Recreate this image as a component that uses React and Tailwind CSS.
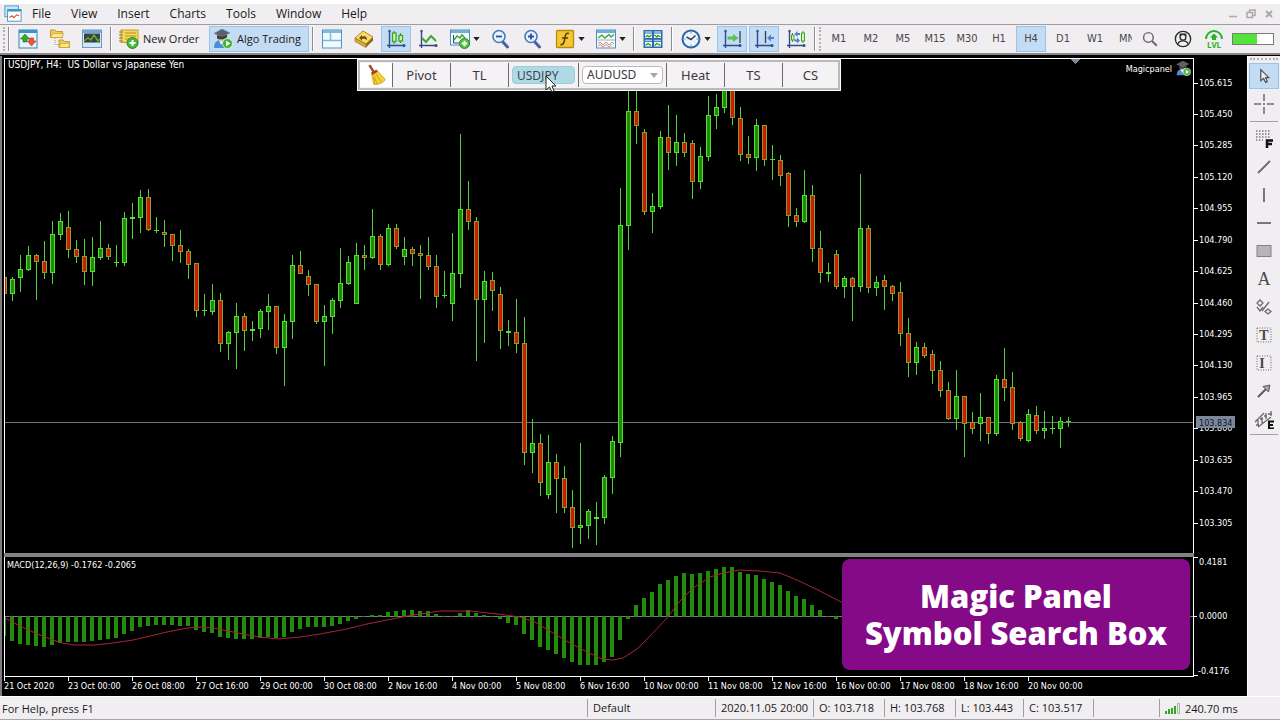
import React, { useState } from "react";

// [high, body top, body bottom, low, 1 = up / 0 = down], one entry per H4 bar
const CANDLES = [
  [277, 277, 294, 294, 0], [277, 279, 294, 301, 1], [255, 269, 278, 292, 1], [246, 255, 270, 271, 1],
  [254, 255, 262, 300, 0], [241, 261, 273, 279, 0], [221, 234, 273, 284, 1], [213, 221, 235, 240, 1],
  [211, 227, 250, 258, 0], [240, 249, 257, 263, 0], [239, 256, 272, 285, 0], [237, 257, 272, 286, 1],
  [221, 248, 258, 260, 1], [244, 248, 257, 260, 0], [245, 262, 263, 267, 1], [212, 218, 263, 266, 1],
  [203, 217, 219, 239, 1], [190, 197, 218, 233, 1], [189, 197, 230, 231, 0], [217, 230, 231, 233, 1],
  [220, 232, 235, 247, 0], [234, 234, 246, 261, 0], [230, 245, 252, 263, 0], [249, 251, 265, 279, 0],
  [263, 263, 311, 317, 0], [294, 310, 311, 316, 1], [284, 300, 312, 315, 1], [293, 300, 344, 352, 0],
  [331, 332, 344, 360, 1], [303, 316, 333, 369, 1], [313, 316, 331, 351, 0], [321, 329, 331, 341, 1],
  [309, 311, 329, 338, 1], [294, 306, 312, 330, 1], [306, 306, 348, 354, 0], [314, 321, 348, 386, 1],
  [255, 265, 322, 339, 1], [251, 265, 274, 274, 0], [270, 276, 285, 296, 0], [284, 284, 322, 324, 0],
  [305, 316, 322, 366, 1], [298, 300, 317, 334, 1], [248, 283, 301, 308, 1], [256, 262, 284, 285, 1],
  [243, 255, 304, 304, 1], [245, 255, 258, 270, 0], [209, 236, 258, 259, 1], [234, 236, 265, 270, 0],
  [224, 228, 265, 266, 1], [224, 228, 247, 249, 0], [237, 249, 257, 265, 1], [247, 249, 254, 266, 0],
  [245, 253, 256, 299, 0], [237, 255, 267, 270, 0], [255, 266, 297, 308, 0], [271, 295, 296, 298, 1],
  [233, 273, 304, 321, 1], [134, 209, 274, 288, 1], [181, 209, 222, 230, 0], [217, 221, 300, 361, 0],
  [271, 281, 300, 343, 1], [272, 280, 291, 311, 0], [287, 294, 331, 349, 0], [320, 331, 333, 346, 1],
  [299, 332, 344, 353, 0], [317, 343, 453, 465, 0], [419, 443, 453, 473, 1], [434, 443, 483, 496, 0],
  [435, 462, 495, 499, 1], [454, 462, 479, 513, 0], [466, 478, 508, 513, 0], [490, 507, 528, 548, 0],
  [443, 525, 528, 544, 1], [509, 511, 526, 539, 1], [502, 517, 519, 545, 1], [475, 477, 518, 524, 1],
  [436, 441, 478, 494, 1], [188, 225, 443, 457, 1], [70, 111, 226, 250, 1], [70, 111, 126, 144, 0],
  [129, 132, 212, 215, 0], [193, 206, 212, 233, 1], [131, 137, 207, 209, 1], [105, 137, 153, 170, 0],
  [115, 142, 153, 166, 1], [133, 142, 153, 157, 0], [140, 143, 182, 199, 0], [147, 156, 182, 189, 1],
  [96, 115, 157, 161, 1], [94, 107, 116, 129, 1], [80, 84, 108, 113, 1], [80, 84, 118, 125, 0],
  [107, 118, 155, 161, 0], [136, 154, 158, 164, 0], [119, 125, 158, 171, 1], [125, 125, 160, 166, 0],
  [145, 159, 160, 180, 1], [155, 160, 176, 186, 0], [172, 173, 216, 227, 0], [208, 215, 222, 227, 0],
  [170, 195, 222, 223, 1], [185, 195, 249, 262, 0], [231, 248, 273, 283, 0], [263, 272, 274, 282, 1],
  [250, 254, 287, 289, 0], [276, 278, 287, 298, 1], [277, 278, 287, 321, 0], [174, 228, 287, 292, 1],
  [225, 228, 288, 293, 0], [276, 282, 288, 296, 1], [275, 280, 287, 310, 0], [285, 286, 294, 301, 0],
  [282, 292, 334, 346, 0], [318, 333, 363, 377, 0], [342, 347, 363, 375, 1], [343, 347, 356, 358, 0],
  [350, 354, 371, 384, 0], [361, 370, 391, 397, 0], [382, 390, 419, 420, 0], [370, 396, 419, 430, 1],
  [396, 396, 424, 457, 0], [412, 422, 429, 434, 0], [393, 417, 424, 441, 1], [417, 417, 434, 444, 0],
  [375, 379, 434, 436, 1], [348, 379, 388, 401, 0], [372, 387, 424, 430, 0], [421, 422, 439, 441, 0],
  [409, 414, 441, 442, 1], [406, 415, 431, 434, 0], [411, 428, 431, 439, 1], [416, 428, 429, 434, 1],
  [417, 421, 429, 448, 1], [417, 421, 422, 427, 1],
];

// histogram heights, negative is below zero
const MACD = [
  -20, -25, -28, -29, -30, -31, -29, -27, -26, -26, -26, -25, -24, -23, -22, -18, -15, -11, -10, -9, -9, -9, -10, -10,
  -14, -16, -17, -21, -22, -23, -23, -23, -22, -21, -22, -21, -16, -13, -11, -11, -11, -10, -8, -5, -3, -1, 2, 2, 5, 6,
  7, 7, 6, 6, 3, 1, 1, 4, 7, 4, 2, 1, -3, -7, -9, -18, -24, -31, -34, -38, -42, -46, -49, -49, -49, -46, -41, -24, -3,
  12, 19, 25, 33, 37, 41, 44, 43, 44, 46, 48, 50, 50, 45, 43, 42, 38, 35, 32, 26, 21, 18, 12, 7, 1, -3, -5,
];

const SIGNAL =
  "M0 61 L15 69 L28 75 L45 82 L57 86 L70 88 L90 88 L108 86 L128 83 L145 79 L162 75 L182 71 L195 70 L208 71 L228 75 L248 79 L272 82 L295 80 L315 77 L342 72 L362 67 L382 63 L402 59 L422 56 L435 54 L465 54 L492 57 L515 60 L530 65 L548 76 L565 86 L582 95 L597 102 L608 103 L618 101 L632 92 L645 79 L662 61 L675 44 L688 31 L705 20 L718 16 L735 13 L755 14 L775 16 L792 23 L815 34 L838 46 L860 56";

const PRICES = [
  ["105.615", 83], ["105.450", 114], ["105.285", 145], ["105.120", 177], ["104.955", 208],
  ["104.790", 240], ["104.625", 271], ["104.460", 303], ["104.295", 334], ["104.130", 365],
  ["103.965", 397], ["103.800", 428], ["103.635", 460], ["103.470", 491], ["103.305", 523],
];

const DATES = [
  "21 Oct 2020", "23 Oct 00:00", "26 Oct 08:00", "27 Oct 16:00", "29 Oct 00:00", "30 Oct 08:00",
  "2 Nov 16:00", "4 Nov 00:00", "5 Nov 08:00", "6 Nov 16:00", "10 Nov 00:00", "11 Nov 08:00",
  "12 Nov 16:00", "16 Nov 00:00", "17 Nov 08:00", "18 Nov 16:00", "20 Nov 00:00",
];

const TIMEFRAMES = ["M1", "M2", "M5", "M15", "M30", "H1", "H4", "D1", "W1", "MN"];
const MENU = ["File", "View", "Insert", "Charts", "Tools", "Window", "Help"];

const Icon = ({ children, className = "w-5 h-5" }) => (
  <svg viewBox="0 0 20 20" className={`${className} shrink-0`} fill="none" aria-hidden="true">
    {children}
  </svg>
);

const Axes = () => (
  <g stroke="#2f4a8c" fill="#2f4a8c">
    <path d="M3.500 2V19M1 16.500H18" strokeWidth="1.400" />
    <circle cx="3.500" cy="2" r="1.200" stroke="none" />
    <circle cx="18" cy="16.500" r="1.500" stroke="none" />
  </g>
);

const MarketIcon = () => (
  <Icon>
    <rect x="1" y="1" width="18" height="18" fill="#e8f4fc" stroke="#2f86b8" />
    <path d="M1 2.500H19" stroke="#3c94c6" strokeWidth="3" />
    <path d="M7 5L11.500 10H9V13H5V10H2.500Z" fill="#35a82c" stroke="#1f7f1c" strokeWidth=".7" />
    <path d="M13.500 17L9.500 12H11.500V9H15.500V12H18Z" fill="#ef5438" stroke="#c03a24" strokeWidth=".7" />
  </Icon>
);

const FoldersIcon = () => (
  <Icon>
    <path d="M5 7V15.500H11" stroke="#999" strokeDasharray="1 1" />
    <path d="M0.500 1H5L6.500 2.500H12.500V8.500H.5Z" fill="#ecc95a" stroke="#c79a2c" />
    <path d="M2.500 4.500H13.500L12 8.500H.8Z" fill="#fbe78e" stroke="#c79a2c" strokeWidth=".6" />
    <path d="M9 11H13L14.500 12.500H19.500V18.500H9Z" fill="#ecc95a" stroke="#c79a2c" />
    <path d="M11 14.500H20L18.500 18.500H9.500Z" fill="#fbe78e" stroke="#c79a2c" strokeWidth=".6" />
  </Icon>
);

const TerminalIcon = () => (
  <Icon>
    <rect x=".5" y="1" width="19" height="17.500" fill="#d5e6f5" stroke="#6a9cc8" />
    <path d="M1 2.500H19" stroke="#6fa8d8" strokeWidth="3" />
    <rect x="2" y="4.500" width="16" height="9" fill="#3a4148" />
    <path d="M2 12L6 9L9 11L12 6L16 12L18 10" stroke="#5fae2c" strokeWidth="1.500" />
  </Icon>
);

const OrderIcon = () => (
  <Icon>
    <rect x="2" y="1" width="17" height="12.500" fill="#f5d95c" stroke="#c79b24" />
    <path d="M6 4H17M6 7H17M6 10H14" stroke="#b58c1c" />
    <path d="M0 3H4M0 6H4M0 9H4M0 12H4" stroke="#8a7a3a" />
    <circle cx="13.500" cy="14" r="5.500" fill="#48b83a" stroke="#2a8c24" />
    <path d="M13.500 11V17M10.500 14H16.500" stroke="#fff" strokeWidth="2" />
  </Icon>
);

const AlgoIcon = ({ className }) => (
  <Icon className={className}>
    <path d="M1 19C1 13 4 11 8 11S15 13 15 19Z" fill="#4b8fd0" />
    <path d="M6 11L8 16L11 11Z" fill="#f3f3f3" />
    <circle cx="9" cy="8" r="4" fill="#d9b383" />
    <path d="M1 4.500L9 0L17 4L9.500 7.500Z" fill="#5c6068" stroke="#7c8088" strokeWidth=".6" />
    <path d="M4 6V9.500C7 11 11 10.500 14 8.500V5.500L9.500 7.500Z" fill="#3e4248" />
    <circle cx="14.500" cy="14.500" r="5" fill="#43b336" stroke="#e8f6e4" strokeWidth=".8" />
    <path d="M13 11.800L17.500 14.500L13 17.200Z" fill="#fff" />
  </Icon>
);

const LayoutIcon = () => (
  <Icon>
    <rect x=".5" y="1" width="19" height="18" fill="#f2f9fe" stroke="#4a94c4" />
    <path d="M1 2.500H19" stroke="#7db9dc" strokeWidth="3" />
    <path d="M1 11.500H19M8.500 4V11.500" stroke="#7db9dc" strokeWidth="1.500" />
  </Icon>
);

const TagIcon = () => (
  <Icon>
    <path d="M1 9L9 2L19 8L12 15Z" fill="#f7dc6c" stroke="#b48a20" />
    <path d="M1 9L12 15V18.500L1 12.500Z" fill="#d9ab34" stroke="#8d6714" strokeWidth=".6" />
    <path d="M12 15L19 8V11.500L12 18.500Z" fill="#8d6c22" />
    <path d="M5 9L8 6V7.500C11 6.500 14 8 12.500 11.500C12 9.500 10.500 9.500 8 10V11.500Z" fill="#6a4e10" />
  </Icon>
);

const CandlesIcon = () => (
  <Icon>
    <Axes />
    <path d="M8 2V15M14.500 4V14" stroke="#36a51f" strokeWidth="1.300" />
    <rect x="6.500" y="4" width="3.500" height="8.500" fill="#d7f4c8" stroke="#36a51f" strokeWidth="1.300" />
    <rect x="13" y="6.500" width="3.500" height="5.500" fill="#d7f4c8" stroke="#36a51f" strokeWidth="1.300" />
  </Icon>
);

const LineChartIcon = () => (
  <Icon>
    <Axes />
    <path d="M4 9L8 13L13 7L18 12" stroke="#3fa72c" strokeWidth="2" />
  </Icon>
);

const AddIndicatorIcon = () => (
  <Icon>
    <rect x=".5" y="1" width="19" height="15" fill="#f4f9fd" stroke="#4a8fc0" />
    <path d="M1 2.500H19" stroke="#6eaed8" strokeWidth="3" />
    <path d="M3.500 6V14H13" stroke="#2f4a8c" />
    <path d="M4 11L7 7L10 9L12 6L15 9" stroke="#3fa72c" strokeWidth="1.500" />
    <circle cx="14.500" cy="14.500" r="5" fill="#4fc43c" stroke="#2a8c24" />
    <path d="M14.500 11.700V17.300M11.700 14.500H17.300" stroke="#fff" strokeWidth="1.800" />
  </Icon>
);

const ZoomIcon = ({ plus }) => (
  <Icon>
    <path d="M11 12L16.500 18" stroke="#4a5fa8" strokeWidth="3" strokeLinecap="round" />
    <circle cx="8" cy="7.500" r="6" fill="#e6f3fd" stroke="#3f7cc0" strokeWidth="1.600" />
    <path d={plus ? "M5 7.500H11M8 4.500V10.500" : "M5 7.500H11"} stroke="#2c4f9c" strokeWidth="1.800" />
  </Icon>
);

const FunctionIcon = () => (
  <Icon>
    <rect x="1.500" y="1.500" width="17" height="17" rx="1" fill="#f5c634" stroke="#b98a12" strokeWidth="1.300" />
    <path d="M14 4.500C11 3.500 10.500 5.500 10 8.500S9 16.500 5.500 15.500M7 9H13" stroke="#54420c" strokeWidth="1.600" />
  </Icon>
);

const TemplateIcon = () => (
  <Icon>
    <rect x=".5" y="1" width="19" height="18" fill="#f6fafd" stroke="#4a8fc0" />
    <path d="M1 2.500H19" stroke="#6eaed8" strokeWidth="3" />
    <path d="M2 9L6 6L9 9L13 5.500L15 8L18 5.500" stroke="#3fa72c" strokeWidth="1.300" />
    <path d="M1 11H19" stroke="#9cb4c6" />
    <path d="M2 14.500L4 13L7 16L10 13L13 16L16 13L18 15M2 17L4 15.500L7 18L10 15.500L13 18L16 15.500" stroke="#d27a70" strokeWidth=".9" />
  </Icon>
);

const TilesIcon = () => (
  <Icon>
    <rect x=".5" y="1" width="19" height="18" fill="#2b6cb0" />
    <path d="M2 4.500H9V9H2ZM11 4.500H18V9H11ZM2 13H9V17.500H2ZM11 13H18V17.500H11Z" fill="#f4fbf2" />
    <path d="M2 3H9M11 3H18M2 11.500H9M11 11.500H18" stroke="#a4cdec" strokeWidth="1.300" />
    <path d="M2.500 8L4.500 6.500L6 8L8.500 6M11.500 6L14 8L15 6.500L17.500 8M2.500 16.500L5 14.500L8 16.500M11.500 16.500L14 14.500L17.500 16.500" stroke="#2f8f22" strokeWidth="1.200" />
  </Icon>
);

const ClockIcon = () => (
  <Icon>
    <circle cx="10" cy="10" r="8.500" fill="#e9f4fd" stroke="#2f66aa" strokeWidth="2" />
    <path d="M5.500 8L10 10.500L14.500 6.500" stroke="#3c4656" strokeWidth="1.600" />
    <path d="M10 3V4.500M10 15.500V17M3 10H4.500M15.500 10H17" stroke="#7890a8" />
  </Icon>
);

const AutoScrollIcon = () => (
  <Icon>
    <Axes />
    <path d="M18 2V14" stroke="#2f3f60" strokeWidth="1.300" />
    <path d="M5.500 7.500H11V5L16.500 9L11 13V10.500H5.500Z" fill="#5cc04c" />
  </Icon>
);

const ShiftIcon = () => (
  <Icon>
    <Axes />
    <path d="M11.500 2V14" stroke="#2f3f60" strokeWidth="1.300" />
    <path d="M20 8H17V5.500L13 9L17 12.500V10H20Z" fill="#4b82cc" />
  </Icon>
);

const StepIcon = () => (
  <Icon>
    <Axes />
    <path d="M6.500 4V13M17 2V14" stroke="#36a51f" />
    <rect x="5.500" y="6" width="2.500" height="5" fill="#d7f4c8" stroke="#36a51f" />
    <rect x="15.500" y="4" width="3" height="8" fill="#d7f4c8" stroke="#36a51f" />
    <path d="M14 4H11.500V2L8.500 5L11.500 8V6H14ZM8.500 10.500H11V8.500L14 11.500L11 14.500V12.500H8.500Z" fill="#4b7fd0" />
  </Icon>
);

const BroomIcon = () => (
  <Icon className="w-[22px] h-[22px]">
    <path d="M4 1L8.500 8" stroke="#9c4a26" strokeWidth="2.200" />
    <path d="M6 9L11 6L18.500 14C17 17 12 19 8 18.500Z" fill="#f2d33c" stroke="#c99c18" strokeWidth=".7" />
    <path d="M6 9L11 6" stroke="#b5382a" strokeWidth="2.200" />
    <path d="M8 10L11 18M10 9L15 16.500M7.500 12L9 18" stroke="#c99c18" strokeWidth=".8" />
  </Icon>
);

const Tool = ({ label, active, drop, children }) => (
  <button
    aria-label={label}
    className={
      "flex items-center h-[26px] shrink-0 border " +
      (drop ? "w-[39px] pl-1 gap-[3px] " : "w-[30px] justify-center ") +
      (active ? "bg-[#c3dcf3] border-[#98c5ea]" : "border-transparent")
    }
  >
    {children}
    {drop && (
      <svg viewBox="0 0 8 5" className="w-[7px] h-[4px] shrink-0">
        <path d="M0 0H8L4 5Z" fill="#222" />
      </svg>
    )}
  </button>
);

const Sep = () => <div className="w-[2px] h-6 mx-px shrink-0 border-l border-[#8c8c8c] bg-white" />;

const Grip = () => <div className="w-px h-6 shrink-0 border-l-2 border-dotted border-[#b4b0b4]" />;

function MenuBar() {
  return (
    <div className="flex items-center h-5 pl-1 pr-[6px] bg-[#f0eef0]">
      <Icon className="w-[18px] h-[18px]">
        <rect x="1" y="1" width="15" height="12" fill="#cfe8f8" stroke="#3c94c6" />
        <rect x="4" y="5" width="15" height="13" fill="#fff" stroke="#3c94c6" />
        <path d="M4 6H19" stroke="#3c94c6" strokeWidth="2.500" />
        <path d="M6 14L9 12L11 14L14 11L17 12" stroke="#e0563c" strokeWidth="1.300" />
      </Icon>
      <nav className="flex gap-5 ml-[10px]">
        {MENU.map((m) => (
          <button key={m} className="text-xs leading-4 text-[#1a1a1a]">{m}</button>
        ))}
      </nav>
      <div className="flex items-center gap-2 ml-auto text-[#aaa6aa]">
        <button aria-label="Minimize"><Icon className="w-[10px] h-[10px]"><path d="M2 15H18" stroke="currentColor" strokeWidth="3" /></Icon></button>
        <button aria-label="Restore"><Icon className="w-[10px] h-[10px]"><path d="M2 7H13V17H2ZM7 6V2H18V13H14" stroke="currentColor" strokeWidth="3" /></Icon></button>
        <button aria-label="Close"><Icon className="w-[10px] h-[10px]"><path d="M4 4L16 16M16 4L4 16" stroke="currentColor" strokeWidth="4" /></Icon></button>
      </div>
    </div>
  );
}

function Toolbar({ timeframe, setTimeframe }) {
  return (
    <div className="flex items-center gap-[2px] h-[31px] pl-[3px] border-t border-[#a09ca0] border-b-2 border-b-[#8a868a] bg-[#f0eef0]">
      <Grip />
      <Sep />
      <Tool label="Market watch"><MarketIcon /></Tool>
      <Tool label="Navigator"><FoldersIcon /></Tool>
      <Tool label="Terminal"><TerminalIcon /></Tool>
      <Sep />
      <button className="flex items-center gap-1 w-[92px] h-[26px] pl-1 shrink-0 text-[11px] whitespace-nowrap text-[#1a1a1a]">
        <OrderIcon /> New Order
      </button>
      <button className="flex items-center gap-1 w-[100px] h-[26px] pl-[3px] shrink-0 text-[11px] whitespace-nowrap text-[#1a1a1a] bg-[#c3dcf3] border border-[#98c5ea]">
        <AlgoIcon /> Algo Trading
      </button>
      <Sep />
      <Tool label="Toolbox"><LayoutIcon /></Tool>
      <Tool label="Orders"><TagIcon /></Tool>
      <Tool label="Candlesticks" active><CandlesIcon /></Tool>
      <Tool label="Line chart"><LineChartIcon /></Tool>
      <Tool label="New chart" drop><AddIndicatorIcon /></Tool>
      <Tool label="Zoom out"><ZoomIcon /></Tool>
      <Tool label="Zoom in"><ZoomIcon plus /></Tool>
      <Tool label="Indicators" drop><FunctionIcon /></Tool>
      <Tool label="Templates" drop><TemplateIcon /></Tool>
      <Sep />
      <Tool label="Tile windows"><TilesIcon /></Tool>
      <Sep />
      <Tool label="Periods" drop><ClockIcon /></Tool>
      <Tool label="Auto scroll" active><AutoScrollIcon /></Tool>
      <Tool label="Chart shift" active><ShiftIcon /></Tool>
      <Tool label="Step by step"><StepIcon /></Tool>
      <Sep />
      <Grip />
      <div className="flex gap-[2px] overflow-hidden shrink w-[308px] ml-px">
        {TIMEFRAMES.map((t) => (
          <button
            key={t}
            onClick={() => setTimeframe(t)}
            className={
              "w-[30px] h-[26px] shrink-0 border font-['DejaVu_Sans_Condensed','DejaVu_Sans',sans-serif] text-[11px] text-[#4a464a] " +
              (t === timeframe ? "bg-[#c3dcf3] border-[#98c5ea]" : "border-transparent")
            }
          >
            {t}
          </button>
        ))}
      </div>
      <div className="flex items-center gap-2 ml-auto pr-[6px]">
        <div className="flex items-center gap-3">
          <button aria-label="Search" className="mr-1">
            <Icon className="w-4 h-4">
              <circle cx="8" cy="8" r="6" stroke="#6c686c" strokeWidth="1.800" />
              <path d="M12.500 12.500L18.500 18.500" stroke="#6c686c" strokeWidth="2.500" />
            </Icon>
          </button>
          <button aria-label="Account">
            <Icon className="w-[18px] h-[18px]">
              <circle cx="10" cy="10" r="8.500" stroke="#2c2c2c" strokeWidth="1.500" />
              <circle cx="10" cy="8" r="3.200" stroke="#2c2c2c" strokeWidth="1.500" />
              <path d="M4.500 15.500C5 12.500 7 12 10 12S15 12.500 15.500 15.500M7 7V4.500H13V7" stroke="#2c2c2c" strokeWidth="1.500" />
            </Icon>
          </button>
          <button aria-label="Level">
            <svg viewBox="0 0 20 20" className="w-5 h-5">
              <path d="M2 10A8 8 0 0 1 18 10" fill="none" stroke="#28b428" strokeWidth="2" />
              <path d="M10 4.500L14 8.500H12V11H8V8.500H6Z" fill="#28b428" />
              <text x="10" y="19" textAnchor="middle" fontSize="8" fontWeight="bold" fill="#28b428">LVL</text>
            </svg>
          </button>
        </div>
        <div className="flex w-[42px] h-3 border border-[#7c787c] bg-white">
          <div className="w-3/5 bg-[#56e23c]" />
        </div>
      </div>
    </div>
  );
}

function MagicPanel() {
  const [symbol, setSymbol] = useState("USDJPY");
  const [pair, setPair] = useState("AUDUSD");

  const cell = "h-6 border-l border-[#6c686c] text-[13px] leading-6 text-[#3c383c] ";

  return (
    <div className="absolute top-0 left-1/2 -translate-x-1/2 border border-white z-10">
      <div className="flex items-center h-[30px] border-2 border-[#bcb8bc] bg-[#f4f2f4] font-['Noto_Sans',sans-serif]">
        <button aria-label="Clear chart" className="flex items-center justify-center w-8 h-6 bg-white">
          <BroomIcon />
        </button>
        <button className={cell + "w-[58px]"}>Pivot</button>
        <button className={cell + "w-[58px]"}>TL</button>
        <div className="relative flex items-center w-[70px] h-6 px-[3px] border-l border-[#6c686c]">
          <input
            aria-label="Symbol search"
            value={symbol}
            onChange={(e) => setSymbol(e.target.value)}
            className="w-full h-[18px] pl-1 rounded-sm border border-[#9ecbd9] bg-[#b0d9e6] text-xs leading-4 text-[#3c484c] outline-none"
          />
          <svg viewBox="0 0 12 18" className="absolute left-9 top-3 w-3 h-[18px]">
            <path d="M1 1V15L4.500 12L7 17L9 16L7 11H11Z" fill="#fff" stroke="#222" strokeWidth="1" />
          </svg>
        </div>
        <div className="relative flex items-center w-[88px] h-6 px-[3px] border-l border-[#6c686c]">
          <select
            aria-label="Symbol"
            value={pair}
            onChange={(e) => setPair(e.target.value)}
            className="appearance-none w-full h-[18px] pl-1 rounded-sm border border-[#bcb8bc] bg-white text-xs leading-4 text-[#3c383c] outline-none"
          >
            <option>AUDUSD</option>
            <option>EURUSD</option>
            <option>USDJPY</option>
          </select>
          <svg viewBox="0 0 8 5" className="absolute right-2 w-2 h-[5px] pointer-events-none">
            <path d="M0 0H8L4 5Z" fill="#a8a4a8" />
          </svg>
        </div>
        <button className={cell + "w-[58px]"}>Heat</button>
        <button className={cell + "w-[58px]"}>TS</button>
        <button className={cell + "w-14"}>CS</button>
      </div>
    </div>
  );
}

function PriceChart() {
  return (
    <svg className="absolute inset-0 w-full h-full" shapeRendering="crispEdges">
      <g transform="translate(0 -59)">
        <rect x="0" y="422" width="100%" height="1" fill="#6c7480" />
        {CANDLES.map(([high, top, bottom, low, up], i) => {
          const x = i * 8 - 1;
          return (
            <g key={i}>
              <rect x={x} y={high} width="1" height={Math.max(low - high, 1)} fill="#4fd23c" />
              <rect x={x - 2} y={top} width="5" height={Math.max(bottom - top, 1)} fill={up ? "#4fe02c" : "#8c9c28"} />
              {bottom - top > 2 && (
                <rect x={x - 1} y={top + 1} width="3" height={bottom - top - 2} fill={up ? "#1f8c0c" : "#cc1c08"} />
              )}
            </g>
          );
        })}
        <path d="M1065 59H1075L1070 64Z" fill="#7c8898" />
      </g>
    </svg>
  );
}

function MacdChart() {
  return (
    <svg className="absolute inset-0 w-full h-full">
      <g shapeRendering="crispEdges">
        {MACD.map((v, i) => (
          <rect key={i} x={i * 8 - 3} y={v > 0 ? 60 - v : 59} width="4" height={Math.abs(v)} fill="#248c0c" />
        ))}
        <line x1="0" y1="59.500" x2="100%" y2="59.500" stroke="#7c7c84" strokeDasharray="5 3" />
      </g>
      <path d={SIGNAL} fill="none" stroke="#a8243c" strokeWidth="1" />
    </svg>
  );
}

function Chart() {
  return (
    <div className="flex flex-1 min-w-0 pl-[2px] pt-[2px] bg-black border-l-2 border-[#807c80] text-white font-['DejaVu_Sans_Condensed','DejaVu_Sans',sans-serif] text-[9px] leading-3">
      <div className="flex flex-col flex-1 min-w-0">
        <div className="relative flex-1 border-l border-t border-r border-white overflow-hidden">
          <PriceChart />
          <div className="relative flex justify-between items-start pl-[3px] pr-[2px]">
            <span className="whitespace-pre text-[10px]">USDJPY, H4:  US Dollar vs Japanese Yen</span>
            <span className="flex items-center gap-1 pt-[2px]">
              Magicpanel <AlgoIcon className="w-[15px] h-[15px]" />
            </span>
          </div>
          <MagicPanel />
        </div>
        <div className="h-1 bg-[#848084]" />
        <div className="relative h-[120px] border-l border-r border-b border-white">
          <MacdChart />
          <span className="relative block pl-[2px] pt-[2px]">MACD(12,26,9) -0.1762 -0.2065</span>
          <div className="absolute right-[3px] top-[2px] flex items-center justify-center w-[348px] h-[111px] rounded-lg bg-[#850a88] font-['Open_Sans',sans-serif] font-extrabold text-[31px] leading-[37px] text-center whitespace-nowrap">
            <p>Magic Panel<br />Symbol Search Box</p>
          </div>
        </div>
        <div className="flex h-[19px]">
          {DATES.map((d) => (
            <div key={d} className="relative w-16 shrink-0 whitespace-nowrap">
              <div className="w-px h-1 bg-white" />
              <div className="leading-[10px]">{d}</div>
            </div>
          ))}
        </div>
      </div>

      <svg className="w-[53px] h-full shrink-0" fontSize="9">
        <g transform="translate(0 -58)" fill="#fff">
          {PRICES.map(([label, y]) => (
            <g key={label}>
              <rect x="0" y={y} width="4" height="1" />
              <text x="5" y={y + 3}>{label}</text>
            </g>
          ))}
          <rect x="2" y="416" width="39" height="12" fill="#7c889c" />
          <text x="5" y="426" fill="#10141c">103.834</text>
          <rect x="0" y="557" width="4" height="1" />
          <text x="5" y="565">0.4181</text>
          <rect x="0" y="616" width="3" height="1" />
          <text x="5" y="619">0.0000</text>
          <rect x="0" y="675" width="4" height="1" />
          <text x="4" y="674">-0.4176</text>
        </g>
      </svg>
    </div>
  );
}

const DRAW_TOOLS = [
  ["Fibonacci", <><path d="M2 2H17M2 5H17M2 8H17M2 11H9" stroke="#7c787c" strokeWidth="1.500" strokeDasharray="1.500 1.500" /><path d="M13 19V11.500H19M13 15H18" stroke="#111" strokeWidth="2.500" /></>],
  ["Trendline", <path d="M4 16L16 4" stroke="#6c686c" strokeWidth="1.800" />],
  ["Vertical line", <path d="M10 3V17" stroke="#6c686c" strokeWidth="1.800" />],
  ["Horizontal line", <path d="M3 10H17" stroke="#6c686c" strokeWidth="1.800" />],
  ["Rectangle", <rect x="3" y="4.500" width="14" height="11" fill="#b8b4b8" stroke="#848084" />],
  ["Text", <text x="10" y="16" textAnchor="middle" fontSize="18" fontFamily="Liberation Serif, serif" fill="#4c484c">A</text>],
  ["Shapes", <path d="M6 3L9 6L6 9L3 6ZM14 12L17 14.500L14 17L11 14.500ZM8 14L15 5M3 10L6 14L9 10" stroke="#6c686c" strokeWidth="1.300" />],
  ["Label", <><rect x="3" y="3" width="14" height="14" stroke="#6c686c" strokeDasharray="1 1.500" /><text x="10" y="15" textAnchor="middle" fontSize="14" fontWeight="bold" fontFamily="Liberation Serif, serif" fill="#4c484c">T</text></>],
  ["Edit box", <><rect x="3" y="3" width="14" height="14" stroke="#6c686c" strokeDasharray="1 1.500" /><text x="8" y="15" textAnchor="middle" fontSize="14" fontWeight="bold" fontFamily="Liberation Serif, serif" fill="#4c484c">I</text></>],
  ["Arrow", <><path d="M4 16L12 8" stroke="#5c585c" strokeWidth="2" /><path d="M16 4L14.500 11L9 5.500Z" fill="#a8a4a8" stroke="#5c585c" /></>],
  ["Elliott wave", <><path d="M1 13L10 4M4 18L17 8M4 11V17M8 8V14M12 4V10M17 2V7M2 16H5M6 10H9M10 7H13M14 5H18" stroke="#6c686c" strokeWidth="1.300" /><path d="M20 12.500H15V19.500H20M15 16H19" stroke="#111" strokeWidth="2" /></>],
];

function DrawBar() {
  const btn = "flex items-center justify-center w-[30px] h-[26px] shrink-0 border ";
  return (
    <div className="flex flex-col items-center gap-[2px] w-[33px] shrink-0 bg-[#f0eef0] border-l border-white pt-[2px]">
      <div className="w-7 h-[3px] border-t-2 border-dotted border-[#b4b0b4]" />
      <button aria-label="Cursor" className={btn + "bg-[#c3dcf3] border-[#98c5ea]"}>
        <Icon className="w-4 h-4">
          <path d="M6 2V16L9.500 13L12 18L14 17L12 12H16Z" fill="#e8f0f8" stroke="#4c4c54" strokeWidth="1.500" />
        </Icon>
      </button>
      <button aria-label="Crosshair" className={btn + "border-transparent"}>
        <Icon>
          <path d="M10 0V7M10 13V20M0 10H7M13 10H20M9 10H11" stroke="#6c686c" strokeWidth="1.500" />
        </Icon>
      </button>
      <div className="w-7 h-px my-[2px] bg-[#a4a0a4]" />
      {DRAW_TOOLS.map(([label, shape]) => (
        <button key={label} aria-label={label} className={btn + "border-transparent"}>
          <Icon>{shape}</Icon>
        </button>
      ))}
      <div className="w-7 h-px bg-[#a4a0a4]" />
    </div>
  );
}

function StatusBar() {
  const cell = "h-[18px] shrink-0 pl-[5px] border-l border-[#a09ca0] leading-[17px] whitespace-nowrap ";
  return (
    <div className="flex items-center h-6 border-t border-white border-b border-b-[#a8a4a8] bg-[#f0eef0] text-[11px] text-[#1a1a1a]">
      <div className="flex-1 pl-[2px] leading-[17px]">For Help, press F1</div>
      <div className={cell + "w-32"}>Default</div>
      <div className={cell + "w-[98px]"}>2020.11.05 20:00</div>
      <div className={cell + "w-[71px]"}>O: 103.718</div>
      <div className={cell + "w-[71px]"}>H: 103.768</div>
      <div className={cell + "w-[68px]"}>L: 103.443</div>
      <div className={cell + "w-[70px]"}>C: 103.517</div>
      <div className={cell + "w-[66px]"} />
      <div className={cell + "w-[121px] flex items-center gap-[5px]"}>
        <svg viewBox="0 0 15 11" className="w-[15px] h-[11px]">
          <path d="M0 8H2V11H0ZM3 6H5V11H3ZM6 5H8V11H6ZM9 3H11V11H9Z" fill="#2fa81c" />
          <path d="M12.500 .5H14.500V10.500H12.500Z" fill="#e8e8e8" stroke="#a4a0a4" strokeWidth=".8" />
        </svg>
        240.70 ms
      </div>
    </div>
  );
}

export default function App() {
  const [timeframe, setTimeframe] = useState("H4");

  return (
    <div className="flex flex-col h-screen overflow-hidden pt-1 bg-white font-['Open_Sans',sans-serif]">
      <MenuBar />
      <Toolbar timeframe={timeframe} setTimeframe={setTimeframe} />
      <div className="flex flex-1 min-h-0 pt-px bg-black">
        <Chart />
        <DrawBar />
      </div>
      <StatusBar />
    </div>
  );
}
